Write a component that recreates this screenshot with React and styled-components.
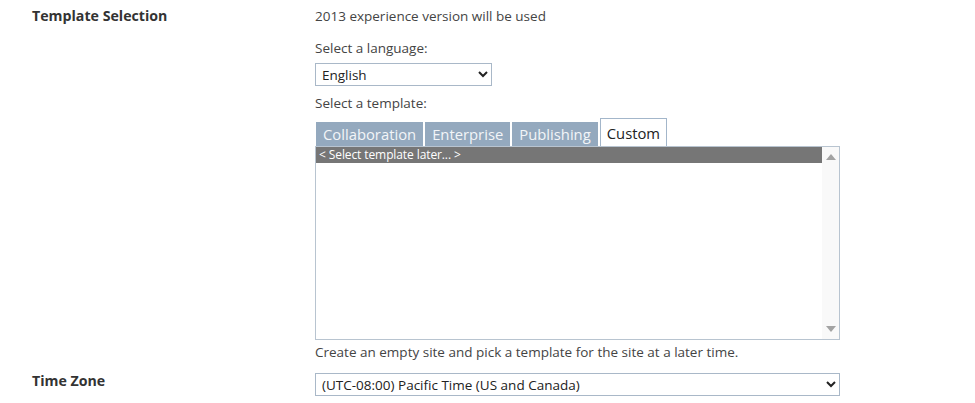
import React from 'react';
import styled, { createGlobalStyle } from 'styled-components';

const GlobalStyle = createGlobalStyle`
   body {
      margin: 0;
      background: #ffffff;
      font-family: "Open Sans", "Noto Sans", sans-serif;
      font-size: 13.5px;
      color: #444444;
   }
`;

const Page = styled.div`
   width: 975px;
   height: 403px;
   overflow: hidden;
`;

const Row = styled.div`
   display: grid;
   grid-template-columns: 315px 525px;
   padding-top: ${props => props.top || 0}px;
`;

const Label = styled.div`
   padding-left: 32px;
   margin-top: ${props => props.top || 0}px;
   font-weight: 700;
   font-size: 14.2px;
   line-height: 18px;
   color: #333333;
`;

const Field = styled.div`
   display: flex;
   flex-direction: column;
   align-items: flex-start;
`;

const Text = styled.div`
   line-height: 18px;
   margin-top: ${props => props.before || 0}px;
   margin-bottom: ${props => props.after || 0}px;
   color: #444444;
   white-space: nowrap;
`;

const Select = styled.select`
   width: ${props => props.width}px;
   height: 23px;
   border: 1px solid #a9b8c8;
   border-radius: 0;
   background: #ffffff;
   font-family: "Open Sans", "Noto Sans", sans-serif;
   font-size: 13.5px;
   color: #222222;
   padding: 0 2px;
   margin: 0;
   outline: none;
`;

const Tabs = styled.div`
   display: flex;
   align-items: flex-end;
   gap: 2px;
   padding-left: 1px;
   height: 28px;
   margin-top: 6px;
`;

const Tab = styled.div`
   height: ${props => (props.active ? 28 : 24)}px;
   box-sizing: border-box;
   padding: 0 ${props => (props.active ? 6 : 7)}px;
   display: flex;
   align-items: center;
   font-size: 14.8px;
   background: ${props => (props.active ? '#ffffff' : '#94a9be')};
   color: ${props => (props.active ? '#222222' : '#f2f5f8')};
   border: ${props => (props.active ? '1px solid #a3b6ca' : 'none')};
   border-bottom: none;
`;

const ListBox = styled.div`
   width: 525px;
   height: 194px;
   box-sizing: border-box;
   border: 1px solid #b8c4d0;
   display: flex;
`;

const ListItems = styled.div`
   flex: 1;
`;

const ListItem = styled.div`
   height: 16px;
   line-height: 16px;
   padding-left: 3px;
   background: ${props => (props.selected ? '#767676' : 'transparent')};
   color: ${props => (props.selected ? '#ffffff' : '#222222')};
   font-size: 12px;
   letter-spacing: -0.1px;
   white-space: nowrap;
`;

const ScrollBar = styled.div`
   width: 17px;
   background: #f9f9f9;
   display: flex;
   flex-direction: column;
   justify-content: space-between;
   align-items: center;
   padding: 7px 0;
`;

const Arrow = styled.div`
   width: 0;
   height: 0;
   border-left: 5px solid transparent;
   border-right: 5px solid transparent;
   border-bottom: ${props => (props.down ? 'none' : '6px solid #a3a3a3')};
   border-top: ${props => (props.down ? '6px solid #a3a3a3' : 'none')};
`;

export default function App() {
   return (
      <Page>
         <GlobalStyle />
         <Row top={7}>
            <Label>Template Selection</Label>
            <Field>
               <Text after={14}>2013 experience version will be used</Text>
               <Text after={6}>Select a language:</Text>
               <Select width={177} defaultValue="en">
                  <option value="en">English</option>
               </Select>
               <Text before={8}>Select a template:</Text>
               <Tabs>
                  <Tab>Collaboration</Tab>
                  <Tab>Enterprise</Tab>
                  <Tab>Publishing</Tab>
                  <Tab active>Custom</Tab>
               </Tabs>
               <ListBox>
                  <ListItems>
                     <ListItem selected>&lt; Select template later... &gt;</ListItem>
                  </ListItems>
                  <ScrollBar>
                     <Arrow />
                     <Arrow down />
                  </ScrollBar>
               </ListBox>
               <Text before={3}>
                  Create an empty site and pick a template for the site at a later time.
               </Text>
            </Field>
         </Row>
         <Row top={12}>
            <Label top={-1}>Time Zone</Label>
            <Field>
               <Select width={525} defaultValue="pst">
                  <option value="pst">(UTC-08:00) Pacific Time (US and Canada)</option>
               </Select>
            </Field>
         </Row>
      </Page>
   );
}
